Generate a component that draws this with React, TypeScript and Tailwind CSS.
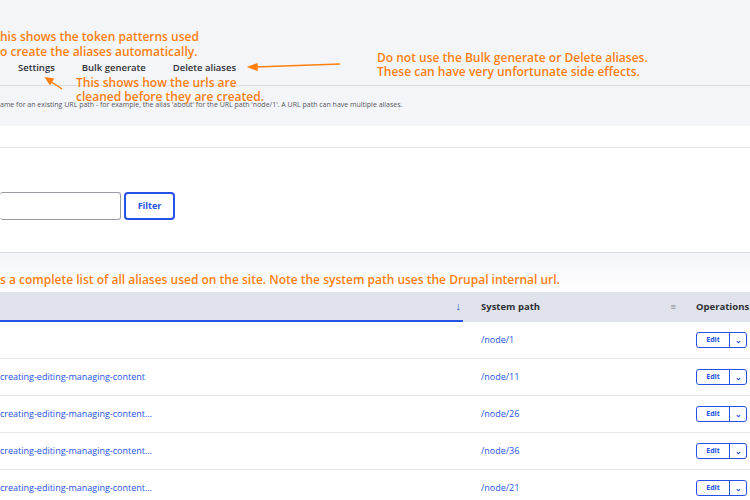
import React from "react";

const rows = [
  ["", "/node/1"],
  ["creating-editing-managing-content", "/node/11"],
  ["creating-editing-managing-content…", "/node/26"],
  ["creating-editing-managing-content…", "/node/36"],
  ["creating-editing-managing-content…", "/node/21"],
];

export default function App() {
  return (
    <div className="relative w-[750px] h-[500px] overflow-hidden bg-white text-[#232429]" style={{ fontFamily: '"Open Sans", "Noto Sans", sans-serif' }}>
      <div className="bg-[#f4f5f9]">
        <div className="h-[86px] border-b border-[#dcdde3] flex items-end">
          <div className="flex gap-[27px] pl-[18px] pb-[10px] text-[9.5px] font-semibold text-[#2e3036]">
            <span>Settings</span>
            <span>Bulk generate</span>
            <span>Delete aliases</span>
          </div>
        </div>
        <div className="h-[40px] flex items-center text-[7px] text-[#55565b] pb-[2px]">
          ame for an existing URL path - for example, the alias 'about' for the URL path 'node/1'. A URL path can have multiple aliases.
        </div>
      </div>
      <div className="h-[22px] border-b border-[#e6e7eb] bg-white" />
      <div className="h-[105px] bg-white flex items-center gap-[3px] pt-[12px] border-b border-[#dcdde3]">
        <div className="w-[121px] h-[28px] border border-[#9a9ba3] rounded-[3px] border-l-0" />
        <div className="w-[51px] h-[28px] border-2 border-[#2552e6] rounded-[4px] flex items-center justify-center text-[9px] font-bold text-[#2552e6]">Filter</div>
      </div>
      <div className="h-[39px] bg-gradient-to-b from-[#f4f5f9] to-white" />
      <div className="bg-[#e0e3eb] h-[30px] flex items-center text-[9.5px] font-bold text-[#2e3036]">
        <div className="w-[463px] h-full border-b-2 border-[#2552e6] flex items-center justify-end pr-[2px] text-[#2552e6]">
          <span className="text-[11px]">↓</span>
        </div>
        <div className="w-[233px] pl-[18px] flex justify-between pr-[20px]">
          <span>System path</span>
          <span className="text-[#9ea0a8] font-normal">≡</span>
        </div>
        <span>Operations</span>
      </div>
      {rows.map((r, i) => (
        <div key={i} className="h-[37px] border-b border-[#e6e7eb] flex items-center text-[9px] text-[#2552e6]">
          <div className="w-[481px]">{r[0]}</div>
          <div className="w-[215px]">{r[1]}</div>
          <div className="flex h-[16px] border border-[#2552e6] rounded-[3px] text-[7px] font-bold">
            <span className="w-[33px] flex items-center justify-center border-r border-[#2552e6]">Edit</span>
            <span className="w-[16px] flex items-center justify-center text-[8px]">⌄</span>
          </div>
        </div>
      ))}

      <div className="absolute left-0 top-[29px] text-[12px] leading-[15px] font-semibold text-[#ff7f0e]">
        <div>his shows the token patterns used</div>
        <div>o create the aliases automatically.</div>
      </div>
      <div className="absolute left-[76px] top-[76px] text-[12px] leading-[14px] font-semibold text-[#ff7f0e]">
        <div>This shows how the urls are</div>
        <div>cleaned before they are created.</div>
      </div>
      <div className="absolute left-[377px] top-[51px] text-[12px] leading-[14px] font-semibold text-[#ff7f0e]">
        <div>Do not use the Bulk generate or Delete aliases.</div>
        <div>These can have very unfortunate side effects.</div>
      </div>
      <div className="absolute left-0 top-[271px] text-[12px] font-semibold text-[#ff7f0e] whitespace-nowrap">
        s a complete list of all aliases used on the site. Note the system path uses the Drupal internal url.
      </div>
      <svg className="absolute left-0 top-0" width="750" height="500">
        <g stroke="#ff7f0e" strokeWidth="1.5" fill="#ff7f0e">
          <line x1="340" y1="64" x2="255" y2="67" />
          <polygon points="249,67 257,64 257,70" />
          <line x1="62" y1="89" x2="50" y2="81" />
          <polygon points="46,78 53,79 50,84" />
        </g>
      </svg>
    </div>
  );
}
